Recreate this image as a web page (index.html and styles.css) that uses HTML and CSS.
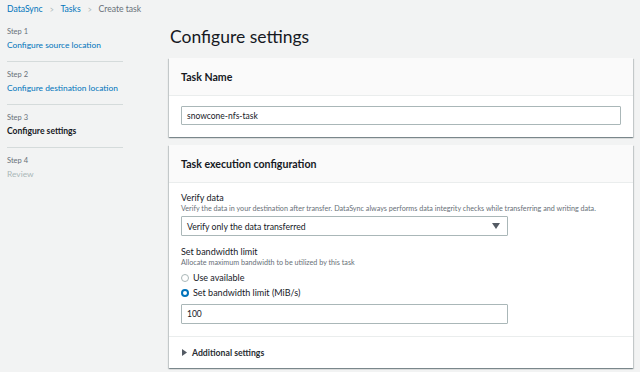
FILE: index.html
```html
<!DOCTYPE html>
<html>
<head>
<meta charset="utf-8">
<link rel="stylesheet" href="styles.css">
</head>
<body>
<div class="page">
  <nav class="crumbs">
    <a class="crumb-link">DataSync</a>
    <span class="sep">&gt;</span>
    <a class="crumb-link">Tasks</a>
    <span class="sep">&gt;</span>
    <span class="crumb-current">Create task</span>
  </nav>
  <div class="layout">
    <aside class="steps">
      <div class="step">
        <div class="step-num">Step 1</div>
        <div class="step-title link">Configure source location</div>
      </div>
      <div class="step">
        <div class="step-num">Step 2</div>
        <div class="step-title link">Configure destination location</div>
      </div>
      <div class="step">
        <div class="step-num">Step 3</div>
        <div class="step-title active">Configure settings</div>
      </div>
      <div class="step last">
        <div class="step-num">Step 4</div>
        <div class="step-title disabled">Review</div>
      </div>
    </aside>
    <main class="content">
      <h1 class="title">Configure settings</h1>
      <section class="card">
        <header class="card-head">Task Name</header>
        <div class="card-body name-body">
          <div class="input wide">snowcone-nfs-task</div>
        </div>
      </section>
      <section class="card">
        <header class="card-head">Task execution configuration</header>
        <div class="card-body exec-body">
          <div class="field">
            <div class="label">Verify data</div>
            <div class="desc">Verify the data in your destination after transfer. DataSync always performs data integrity checks while transferring and writing data.</div>
            <div class="input select">
              <span>Verify only the data transferred</span>
              <svg class="caret" width="8" height="6" viewBox="0 0 8 6"><path d="M0 0H8L4 6Z" fill="#545b64"/></svg>
            </div>
          </div>
          <div class="field">
            <div class="label">Set bandwidth limit</div>
            <div class="desc">Allocate maximum bandwidth to be utilized by this task</div>
            <div class="radio"><span class="dot"></span>Use available</div>
            <div class="radio"><span class="dot on"></span>Set bandwidth limit (MiB/s)</div>
            <div class="input mid">100</div>
          </div>
        </div>
        <div class="expander">
          <svg width="5" height="7" viewBox="0 0 5 7"><path d="M0 0L5 3.5L0 7Z" fill="#545b64"/></svg>
          <span>Additional settings</span>
        </div>
      </section>
    </main>
  </div>
</div>
</body>
</html>
```
FILE: styles.css
```css
* { box-sizing: border-box; }
html, body { margin: 0; padding: 0; }
body {
  background: #f2f3f3;
  font-family: "Lato", "Open Sans", sans-serif;
  color: #16191f;
  width: 640px;
  height: 372px;
  overflow: hidden;
}
.page { padding: 0 7px 0 7px; }
.crumbs {
  height: 17px;
  display: flex;
  align-items: center;
  gap: 6px;
  font-size: 8.6px;
}
.crumb-link { color: #0073bb; }
.crumb-current { color: #687078; }
.sep { color: #aab7b8; font-size: 10px; transform: scaleX(0.7); }
.layout { display: flex; }
.steps { width: 116px; flex: none; padding-top: 8px; }
.step {
  border-bottom: 1px solid #d5dbdb;
  padding: 0 0 9px 0;
  margin-bottom: 7px;
}
.step.last { border-bottom: none; }
.step-num { font-size: 7.5px; color: #687078; line-height: 12px; margin-top: 1px; }
.step-title { font-size: 8.4px; line-height: 14px; margin-top: 0; white-space: nowrap; }
.step-title.link { color: #0073bb; }
.step-title.active { color: #16191f; font-weight: 700; font-size: 8.6px; }
.step-title.disabled { color: #aab7b8; }
.content { margin-left: 46px; width: 464px; }
.title {
  font-size: 17.5px;
  font-weight: 400;
  margin: 3px 0 0 1px;
  line-height: 34px;
}
.card {
  background: #fff;
  box-shadow: 0 1px 1px 0 rgba(0,28,36,0.3), 1px 1px 1px 0 rgba(0,28,36,0.15), -1px 1px 1px 0 rgba(0,28,36,0.15);
  margin-bottom: 8px;
  margin-top: 4px;
}
.card + .card { margin-top: 0; }
.card-head {
  background: #fafafa;
  border-bottom: 1px solid #eaeded;
  font-weight: 700;
  font-size: 10.6px;
  height: 38px;
  display: flex;
  align-items: center;
  padding-left: 12px;
}
.card-body { padding: 0 12px; }
.name-body { padding-top: 10px; padding-bottom: 12px; }
.input {
  border: 1px solid #aab7b8;
  height: 19px;
  font-size: 8.5px;
  display: flex;
  align-items: center;
  padding-left: 5px;
  color: #16191f;
  border-radius: 1px;
}
.wide { width: 440px; }
.mid, .select { width: 327px; height: 20px; }
.select { justify-content: space-between; padding-right: 7px; font-size: 8.7px; }
.exec-body { padding-top: 9px; padding-bottom: 12px; }
.field + .field { margin-top: 10px; }
.label { font-size: 9px; line-height: 12px; }
.desc { font-size: 7.2px; line-height: 10px; color: #687078; margin-bottom: 2px; }
.radio {
  display: flex;
  align-items: center;
  font-size: 9px;
  height: 15px;
}
.dot {
  width: 8px; height: 8px;
  border: 1px solid #aab7b8;
  border-radius: 50%;
  margin-right: 4px;
}
.dot.on { border: 2.5px solid #0073bb; background: #fff; }
.radio + .input { margin-top: 4px; }
.expander {
  border-top: 1px solid #eaeded;
  height: 32px;
  display: flex;
  align-items: center;
  padding-left: 13px;
  gap: 5px;
  font-size: 8.7px;
  font-weight: 700;
  color: #2a2e33;
}
```
